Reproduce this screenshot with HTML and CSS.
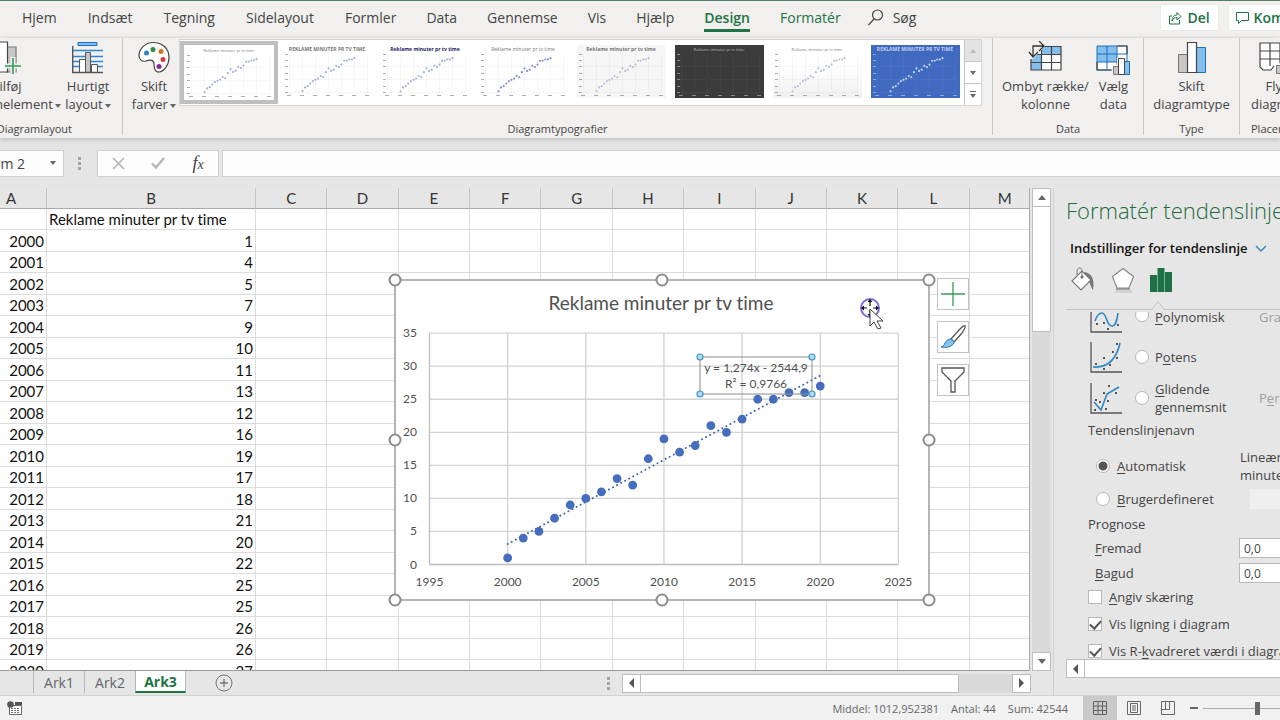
FILE: index.html
```
<!DOCTYPE html>
<html lang="da">
<head>
    <meta charset="UTF-8">
    <meta name="viewport" content="width=device-width, initial-scale=1.0">
    <title>Excel - Ark3</title>
    <link rel="stylesheet" href="styles.css">
</head>
<body>
    <!-- Shared thumbnail drawing for the chart styles -->
    <svg class="defs" width="0" height="0" aria-hidden="true">
        <symbol id="thumb-dots" viewBox="0 0 89 53">
            <g id="thumbPoints" fill="currentColor"></g>
        </symbol>
        <symbol id="thumb-axis" viewBox="0 0 89 53">
            <path d="M2 9.500h3M2 15.500h3M2 21.500h3M2 28.500h3M2 34.500h3M2 41.500h3M2 47.500h3M4 50.500h4M17 50.500h4M30 50.500h4M43 50.500h4M56 50.500h4M69 50.500h4M82 50.500h4" stroke="currentColor" stroke-width="1.200" opacity=".6"/>
            <path d="M6.500 9v38.500M19.500 9v38.500M32.500 9v38.500M45.500 9v38.500M58.500 9v38.500M71.500 9v38.500M84.500 9v38.500M6 47.500h79M6 34.500h79M6 21.500h79" stroke="currentColor" stroke-width=".5" opacity=".12"/>
        </symbol>
    </svg>

    <nav class="menu">
        <button class="tab">Hjem</button>
        <button class="tab">Indsæt</button>
        <button class="tab">Tegning</button>
        <button class="tab">Sidelayout</button>
        <button class="tab">Formler</button>
        <button class="tab">Data</button>
        <button class="tab">Gennemse</button>
        <button class="tab">Vis</button>
        <button class="tab">Hjælp</button>
        <button class="tab active">Design</button>
        <button class="tab context">Formatér</button>
        <button class="tab search">
            <svg width="16" height="17" viewBox="0 0 16 17" fill="none" stroke="#444" stroke-width="1.200"><circle cx="9.500" cy="6" r="5"/><path d="M6 10L.5 16"/></svg>
            Søg
        </button>
        <div class="menu-actions">
            <button class="action">
                <svg width="14" height="14" viewBox="0 0 14 14" fill="none" stroke="#217346"><path d="M4 5H1.500v8h10V9"/><path d="M4 10c0-4 2-6 5-6V1.500L13 5.500 9 9V6.500C7 6.500 5 7 4 10z"/></svg>
                Del
            </button>
            <button class="action">
                <svg width="13" height="13" viewBox="0 0 13 13" fill="none" stroke="#217346"><path d="M.5 1.500h12v8h-7l-3 3v-3h-2z"/></svg>
                Kommentarer
            </button>
        </div>
    </nav>

    <header class="ribbon">
        <section class="group group-layout">
            <div class="group-body">
                <button class="tool">
                    <svg width="36" height="34" viewBox="0 0 36 34" fill="#fff" stroke="#444" stroke-width="1.200"><path d="M1 13h9v18H1z" fill="#83beec" stroke="#1e6fb8"/><path d="M18 6h9v25h-9z" fill="#c8c6c4" stroke="#777"/><path d="M9.500 1h9v30h-9z"/><path d="M24 16v18M15 25h17" stroke="#f1f0ef" stroke-width="5"/><path d="M24 17v16M16 25h16" stroke="#2e9e52" stroke-width="1.600"/></svg>
                    <span>Tilføj<br>diagramelement <i class="caret"></i></span>
                </button>
                <button class="tool">
                    <svg width="32" height="34" viewBox="0 0 32 34"><path d="M1 9.500h30M1 15.500h30M1 20.500h30M1 25.500h30" stroke="#2d87d0" stroke-width="1.500"/><path d="M6 1.500h19v3H6z" fill="#83beec" stroke="#1e6fb8"/><g stroke="#555"><path d="M7.500 18.500h6v13h-6zM19.500 23.500h6v8h-6z" fill="#fff"/><path d="M13.500 11.500h5v20h-5z" fill="#c8c6c4"/><path d="M.7 5v26.500H31" fill="none" stroke-width="1.400"/></g></svg>
                    <span>Hurtigt<br>layout <i class="caret"></i></span>
                </button>
            </div>
            <h2>Diagramlayout</h2>
        </section>

        <section class="group group-styles">
            <div class="group-body">
                <button class="tool tool-colors">
                    <svg width="32" height="34" viewBox="0 0 32 34"><path d="M15 1.500C7 1.500 1 8 1 14.500c0 4 3 6.500 7 5.500 4-1.500 8-1 8 3 0 4 1 8.500 5 8 5-.6 10-7 10-14.500C31 7 24 1.500 15 1.500z" fill="#fff" stroke="#444" stroke-width="1.200"/><circle cx="8.500" cy="12" r="2.500" fill="#2b7fc3"/><circle cx="15" cy="8.500" r="2.500" fill="#2e8b4a"/><circle cx="23" cy="10.500" r="2.500" fill="#d8701c"/><circle cx="25" cy="18.500" r="2.500" fill="#d8383e"/><circle cx="21" cy="25.500" r="2.500" fill="#86259b"/></svg>
                    <span>Skift<br>farver <i class="caret"></i></span>
                </button>
                <div class="gallery">
                    <div class="thumbs" id="thumbs"></div>
                    <div class="gallery-nav">
                        <button aria-label="Op" disabled><i class="arrow up"></i></button>
                        <button aria-label="Ned"><i class="arrow down"></i></button>
                        <button class="more" aria-label="Mere"><i class="arrow down"></i></button>
                    </div>
                </div>
            </div>
            <h2>Diagramtypografier</h2>
        </section>

        <section class="group group-data">
            <div class="group-body">
                <button class="tool">
                    <svg width="34" height="34" viewBox="0 0 34 34"><path d="M3 6h30v23H3z" fill="#fff"/><path d="M14 6h19v8H14zM3 14h10v15H3z" fill="#83beec"/><path d="M3 6v23h30V5.500H3M3 13.500h30M3 21.500h30M13.500 6v23M23.500 6v23" fill="none" stroke="#444" stroke-width="1.200"/><path d="M0 0h17v5L5 18H0z" fill="#f1f0ef"/><path d="M5 15V5h10M1 11l4 5 5-5M11 0l5 5-5 5" fill="none" stroke="#333" stroke-width="1.300"/></svg>
                    <span>Ombyt række/<br>kolonne</span>
                </button>
                <button class="tool">
                    <svg width="35" height="34" viewBox="0 0 35 34"><path d="M1 5h30v24H1z" fill="#fff"/><path d="M1 5h20v16H1z" fill="#83beec"/><path d="M1 5h30v24H1zM1 13h30M1 21h30M11 5v24M21 5v24" fill="none" stroke="#1e6fb8"/><path d="M21 5h10v8M1 21v8h14" fill="none" stroke="#444" stroke-width="1.200"/><path d="M16 24h5v-7h9v3h5v14H16z" fill="#f1f0ef"/><path d="M17.500 25.500h5v8h-5z" fill="#c8c6c4" stroke="#777"/><path d="M28.500 20.500h5v13h-5z" fill="#83beec" stroke="#1e6fb8"/><path d="M22.500 17.500h6v16h-6z" fill="#fff" stroke="#444"/></svg>
                    <span>Vælg<br>data</span>
                </button>
            </div>
            <h2>Data</h2>
        </section>

        <section class="group group-type">
            <div class="group-body">
                <button class="tool">
                    <svg width="28" height="34" viewBox="0 0 28 34"><path d="M.5 13.500h9v18h-9z" fill="#c8c6c4" stroke="#777"/><path d="M18.500 6.500h9v25h-9z" fill="#83beec" stroke="#1e6fb8"/><path d="M9.500 1.500h9v30h-9z" fill="#fff" stroke="#444" stroke-width="1.200"/></svg>
                    <span>Skift<br>diagramtype</span>
                </button>
            </div>
            <h2>Type</h2>
        </section>

        <section class="group group-place">
            <div class="group-body">
                <button class="tool">
                    <svg width="34" height="34" viewBox="0 0 34 34"><path d="M1 2h32v20l-18 7H1z" fill="#fff"/><path d="M33 2H1v24l3 3h8l3-4M1 10h32M1 18h32M11 2v23M21 2v20" fill="none" stroke="#444" stroke-width="1.200"/><path d="M17.500 24.500h6v8h-6z" fill="#c8c6c4" stroke="#777"/><path d="M23.500 18.500h6v14h-6z" fill="#fff" stroke="#444"/></svg>
                    <span>Flyt<br>diagram</span>
                </button>
            </div>
            <h2>Placering</h2>
        </section>
    </header>

    <div class="formula-bar">
        <div class="name-box">
            <input type="text" value="Diagram 2" aria-label="Navneboks">
            <button aria-label="Vis navne"><i class="caret"></i></button>
        </div>
        <i class="grip"></i>
        <div class="formula-tools">
            <button aria-label="Annuller"><svg width="13" height="13" viewBox="0 0 13 13" stroke="#b5b5b5" stroke-width="1.700"><path d="M1 1l11 11M12 1L1 12"/></svg></button>
            <button aria-label="Enter"><svg width="14" height="12" viewBox="0 0 14 12" fill="none" stroke="#b5b5b5" stroke-width="2.400"><path d="M1 6.500l4 4L13 1"/></svg></button>
            <button class="fx" aria-label="Indsæt funktion">f<small>x</small></button>
        </div>
        <input class="formula" type="text" aria-label="Formel">
    </div>

    <main class="workspace">
        <div class="book">
            <div class="sheet-area">
                <div class="sheet">
                    <table>
                        <colgroup><col class="col-a"><col class="col-b"></colgroup>
                        <thead><tr id="columns"></tr></thead>
                        <tbody id="rows"></tbody>
                    </table>

                    <svg class="chart" width="536" height="322" viewBox="0 0 536 322">
                        <rect x="1" y="1" width="534" height="320" fill="#fff" stroke="#a3a3a3" stroke-width="1.600"/>
                        <text class="chart-title" x="267" y="31">Reklame minuter pr tv time</text>
                        <g id="gridlines"></g>
                        <g id="axisLabels" class="axis"></g>
                        <line id="trend" stroke="#3f63b5" stroke-width="1.900" stroke-dasharray="0.100 4.500" stroke-linecap="round"/>
                        <g id="points" fill="#456dbd"></g>
                        <g class="equation">
                            <rect x="306" y="78" width="112" height="37" fill="none" stroke="#8b8b8b"/>
                            <text x="362" y="93">y = 1,274x - 2544,9</text>
                            <text x="362" y="109">R² = 0,9766</text>
                            <g fill="#a9dcf5" stroke="#4a90c0" stroke-width="1.200">
                                <circle cx="306" cy="78" r="3"/><circle cx="418" cy="78" r="3"/><circle cx="306" cy="115" r="3"/><circle cx="418" cy="115" r="3"/>
                            </g>
                        </g>
                        <g fill="#fff" stroke="#8c8c8c" stroke-width="2">
                            <circle cx="1" cy="1" r="5.500"/><circle cx="268" cy="1" r="5.500"/><circle cx="535" cy="1" r="5.500"/>
                            <circle cx="1" cy="161" r="5.500"/><circle cx="535" cy="161" r="5.500"/>
                            <circle cx="1" cy="321" r="5.500"/><circle cx="268" cy="321" r="5.500"/><circle cx="535" cy="321" r="5.500"/>
                        </g>
                    </svg>

                    <div class="chart-buttons">
                        <button aria-label="Diagramelementer"><svg width="24" height="24" viewBox="0 0 24 24" stroke="#3a9a5b" stroke-width="1.300"><path d="M12 0v24M0 12h24"/></svg></button>
                        <button aria-label="Diagramtypografier"><svg width="26" height="24" viewBox="0 0 26 24"><path d="M25 1c1 1-1 4-3 7l-8 9-3-3 8-9c3-3 5-5 6-4z" fill="#fff" stroke="#555" stroke-width="1.300"/><path d="M11 14c2 1 3 2 3 4-2 4-8 5-13 4 3-1 3-2 4-4s3-4 6-4z" fill="#83c3f1" stroke="#2b76b3"/></svg></button>
                        <button aria-label="Diagramfiltre"><svg width="24" height="26" viewBox="0 0 24 26" fill="#fff" stroke="#555" stroke-width="1.300"><path d="M1 1h22v4l-9 9v11h-4V14L1 5z"/></svg></button>
                    </div>

                    <svg class="pointer" width="26" height="34" viewBox="0 0 26 34">
                        <circle cx="10" cy="11" r="9" fill="#fff" stroke="#7a6fd6" stroke-width="2"/>
                        <path d="M10 4v5M10 13v5M2 11h5M13 11h5" stroke="#111" stroke-width="1.200"/>
                        <path d="M10 2L7.500 5h5zM10 20l-2.500-3h5zM1 11l3-2.500v5zM19 11l-3-2.500v5z" fill="#111"/>
                        <path d="M10 12v17l4-4 4 7 3-1-4-7h6z" fill="#fff" stroke="#444"/>
                    </svg>
                </div>

                <div class="scroll-y">
                    <button aria-label="Rul op"><i class="arrow up"></i></button>
                    <div class="thumb-y"></div>
                    <button aria-label="Rul ned"><i class="arrow down"></i></button>
                </div>
            </div>

            <div class="sheet-bar">
                <div class="sheet-tabs">
                    <button>Ark1</button>
                    <button>Ark2</button>
                    <button class="current">Ark3</button>
                </div>
                <button class="add-sheet" aria-label="Nyt ark"><svg width="18" height="18" viewBox="0 0 18 18" fill="none" stroke="#777"><circle cx="9" cy="9" r="8"/><path d="M9 5v8M5 9h8" stroke-width="1.400"/></svg></button>
                <i class="grip"></i>
                <div class="scroll-x">
                    <button aria-label="Rul til venstre"><i class="arrow left"></i></button>
                    <div class="thumb-x"></div>
                    <button aria-label="Rul til højre"><i class="arrow right"></i></button>
                </div>
            </div>
        </div>

        <aside class="pane">
            <h1>Formatér tendenslinje</h1>
            <button class="pane-menu">Indstillinger for tendenslinje
                <svg width="12" height="7" viewBox="0 0 12 7" fill="none" stroke="#2d87c8" stroke-width="1.400"><path d="M1 1l5 5 5-5"/></svg>
            </button>
            <div class="pane-icons">
                <button aria-label="Fyld og streg"><svg width="26" height="26" viewBox="0 0 26 26"><path d="M14 5c7 1 11 6 9 18-2-2-3-8-5-11z" fill="#777"/><path d="M2 14L12 4l9 9-10 10z" fill="#fff" stroke="#777" stroke-width="1.200"/><path d="M7 8V4c0-4 5-4 5 0v6" fill="none" stroke="#777"/><circle cx="12" cy="10" r="1.500" fill="#666"/></svg></button>
                <button aria-label="Effekter"><svg width="24" height="26" viewBox="0 0 24 26"><path d="M5 23h15l2 3H3z" fill="#d2d2d2"/><path d="M12 1.500l10.500 8L18 21H6L1.500 9.500z" fill="#fff" stroke="#888" stroke-width="1.200"/><path d="M5 22h14" stroke="#666"/></svg></button>
                <button aria-label="Indstillinger for tendenslinje"><svg width="22" height="24" viewBox="0 0 22 24" fill="#1e7145"><path d="M0 7h7v17H0zM7.500 0h7v24h-7zM15 4h7v20h-7z"/></svg></button>
            </div>
            <svg class="pane-rule" width="226" height="10" viewBox="0 0 226 10" fill="none" stroke="#c3c3c3"><path d="M0 9.500h86l6-8 6 8h130"/></svg>

            <form class="options">
                <div class="type type-cut">
                    <svg width="32" height="31" viewBox="0 0 32 31"><path d="M5 19c2-6 4-8 7-8 5 0 4 13 10 13 4 0 5-6 6-13" fill="none" stroke="#2d87c8" stroke-width="1.600"/><path d="M1 1v29h31" fill="none" stroke="#555" stroke-width="1.300"/><path d="M6 21h2v2H6zM13 20h2v2h-2zM17 26h2v2h-2zM27 22h2v2h-2z" fill="#555"/></svg>
                    <input type="radio" name="type" id="poly">
                    <label for="poly"><u>P</u>olynomisk</label>
                    <span class="muted">Grad</span>
                </div>
                <div class="type">
                    <svg width="32" height="32" viewBox="0 0 32 32"><path d="M3 26c14 1 23-6 27-24" fill="none" stroke="#2d87c8" stroke-width="1.600"/><path d="M1 1v30h31" fill="none" stroke="#555" stroke-width="1.300"/><path d="M5 22h2v2H5zM13 16h2v2h-2zM13 27h2v2h-2zM19 23h2v2h-2zM22 10h2v2h-2zM26 16h2v2h-2zM26 2h2v2h-2z" fill="#555"/></svg>
                    <input type="radio" name="type" id="power">
                    <label for="power">P<u>o</u>tens</label>
                </div>
                <div class="type">
                    <svg width="32" height="32" viewBox="0 0 32 32"><path d="M4 20l7 8 6-16 12-7" fill="none" stroke="#2d87c8" stroke-width="1.600"/><path d="M1 1v30h31" fill="none" stroke="#555" stroke-width="1.300"/><path d="M5 17h2v2H5zM4 27h2v2H4zM9 19h2v2H9zM13 10h2v2h-2zM15 26h2v2h-2zM17 18h2v2h-2zM18 3h2v2h-2zM25 10h2v2h-2z" fill="#555"/></svg>
                    <input type="radio" name="type" id="moving">
                    <label for="moving"><u>G</u>lidende<br>gennemsnit</label>
                    <span class="muted">P<u>e</u>riode</span>
                </div>

                <h3>Tendenslinjenavn</h3>
                <div class="name-row">
                    <input type="radio" name="name" id="auto" checked>
                    <label for="auto"><u>A</u>utomatisk</label>
                    <span>Lineær<br>minuter</span>
                </div>
                <div class="name-row custom">
                    <input type="radio" name="name" id="custom">
                    <label for="custom"><u>B</u>rugerdefineret</label>
                    <input class="field" type="text" aria-label="Navn" disabled>
                </div>

                <h3>Prognose</h3>
                <div class="forecast">
                    <label for="forward"><u>F</u>remad</label>
                    <input class="field" type="text" id="forward" value="0,0">
                </div>
                <div class="forecast">
                    <label for="backward"><u>B</u>agud</label>
                    <input class="field" type="text" id="backward" value="0,0">
                </div>
                <div class="check first">
                    <input type="checkbox" id="intercept">
                    <label for="intercept"><u>A</u>ngiv skæring</label>
                </div>
                <div class="check">
                    <input type="checkbox" id="showEq" checked>
                    <label for="showEq">Vis ligning i <u>d</u>iagram</label>
                </div>
                <div class="check">
                    <input type="checkbox" id="showR" checked>
                    <label for="showR">Vis R-<u>k</u>vadreret værdi i diagram</label>
                </div>
            </form>
            <div class="pane-scroll">
                <button aria-label="Rul til venstre"><i class="arrow left"></i></button>
                <div class="thumb-x"></div>
            </div>
        </aside>
    </main>

    <footer class="status">
        <button class="macro" aria-label="Optag makro"><svg width="16" height="15" viewBox="0 0 16 15"><path d="M2.500 4.500h12v9h-12z" fill="#fff" stroke="#666"/><path d="M8 1h7v3H8z" fill="#555"/><path d="M4 7.500h9M4 9.500h9M4 11.500h9" stroke="#777" stroke-dasharray="2 1"/><circle cx="3.500" cy="3.500" r="3.300" fill="#555"/></svg></button>
        <span>Middel: 1012,952381</span>
        <span>Antal: 44</span>
        <span>Sum: 42544</span>
        <div class="views">
            <button class="on" aria-label="Normal"><svg width="14" height="14" viewBox="0 0 14 14" fill="none" stroke="#666"><path d="M.5.5h13v13H.5zM.5 5h13M.5 9.500h13M5 .5v13M9.500.5v13"/></svg></button>
            <button aria-label="Sidelayout"><svg width="14" height="14" viewBox="0 0 14 14" fill="none" stroke="#666"><path d="M.5.5h13v13H.5zM3.500 2.500h7v9h-7zM5 5h4M5 7h4M5 9h4"/></svg></button>
            <button aria-label="Vis sideskift"><svg width="14" height="14" viewBox="0 0 14 14" fill="none" stroke="#666"><path d="M.5.5h13v13H.5zM.5 8.500h8v-8M4.500.5v8"/></svg></button>
        </div>
        <button class="zoom-out" aria-label="Zoom ud"></button>
        <input class="zoom" type="range" min="10" max="190" value="100" aria-label="Zoom">
    </footer>

    <script>
        const minutes = [1, 4, 5, 7, 9, 10, 11, 13, 12, 16, 19, 17, 18, 21, 20, 22, 25, 25, 26, 26, 27];
        const letters = 'ABCDEFGHIJKLM'.split('');

        // Worksheet
        document.getElementById('columns').innerHTML = letters.map(l => `<th scope="col">${l}</th>`).join('');
        const empty = '<td></td>'.repeat(letters.length - 2);
        let rows = `<tr><td></td><td class="text">Reklame minuter pr tv time</td>${empty}</tr>`;
        minutes.forEach((m, i) => {
            rows += `<tr><td>${2000 + i}</td><td>${m}</td>${empty}</tr>`;
        });
        document.getElementById('rows').innerHTML = rows;

        // Chart
        const px = year => 35.5 + (year - 1995) * 15.63;
        const py = value => 285.5 - value * 6.61;
        let lines = '';
        let labels = '';
        for (let v = 0; v <= 35; v += 5) {
            lines += `<path d="M35.5 ${py(v)}H504.5" stroke="${v ? '#d4d4d4' : '#bcbcbc'}" stroke-width="1.3"/>`;
            labels += `<text class="value" x="23" y="${py(v) + 4}">${v}</text>`;
        }
        for (let y = 1995; y <= 2025; y += 5) {
            lines += `<path d="M${px(y)} 54V285.5" stroke="${y > 1995 ? '#d0d0d0' : '#bcbcbc'}" stroke-width="1.3"/>`;
            labels += `<text x="${px(y)}" y="307">${y}</text>`;
        }
        document.getElementById('gridlines').innerHTML = lines;
        document.getElementById('axisLabels').innerHTML = labels;
        document.getElementById('points').innerHTML =
            minutes.map((m, i) => `<circle cx="${px(2000 + i)}" cy="${py(m)}" r="4.4"/>`).join('');

        const trend = document.getElementById('trend');
        trend.setAttribute('x1', px(2000));
        trend.setAttribute('y1', py(3.1));
        trend.setAttribute('x2', px(2020));
        trend.setAttribute('y2', py(28.58));

        // Chart style gallery
        document.getElementById('thumbPoints').innerHTML =
            minutes.map((m, i) => `<circle cx="${19.5 + i * 2.6}" cy="${47.5 - m * 1.27}" r="1.1"/>`).join('');
        const styles = ['plain small', 'caps bold', 'navy bold', 'violet', 'grey bold', 'dark small', 'fade small', 'blue caps bold'];
        document.getElementById('thumbs').innerHTML = styles.map((s, i) => `
            <button class="style ${s}${i === 0 ? ' selected' : ''}" aria-label="Typografi ${i + 1}">
                <svg width="89" height="53" viewBox="0 0 89 53">
                    <text x="44" y="6">${s.includes('caps') ? 'REKLAME MINUTER PR TV TIME' : 'Reklame minuter pr tv time'}</text>
                    <use href="#thumb-axis" class="marks"/>
                    <use href="#thumb-dots" class="dots"/>
                </svg>
            </button>`).join('');
    </script>
</body>
</html>
```
FILE: styles.css
```
* {
    margin: 0;
    padding: 0;
    box-sizing: border-box;
}

body {
    height: 100vh;
    display: flex;
    flex-direction: column;
    overflow: hidden;
    background: #e6e6e6;
    color: #444;
    font-family: 'Open Sans', 'Noto Sans', sans-serif;
    font-size: 13px;
    white-space: nowrap;
}

button,
input {
    font: inherit;
    color: inherit;
    background: none;
    border: none;
    border-radius: 0;
    outline: none;
}

button {
    display: flex;
    align-items: center;
    justify-content: center;
    flex: none;
    white-space: nowrap;
}

svg {
    flex: none;
    display: block;
}

.defs {
    position: absolute;
}

/* Small glyphs */
.caret,
.arrow {
    display: inline-block;
    border: 3px solid transparent;
    border-top: 4px solid #666;
    border-bottom: none;
    vertical-align: middle;
}

.arrow {
    border-width: 5px 4px 0;
}

.arrow.up {
    border-top: none;
    border-bottom: 5px solid #666;
}

.arrow.left {
    border: 5px solid transparent;
    border-left: none;
    border-right-color: #555;
}

.arrow.right {
    border: 5px solid transparent;
    border-right: none;
    border-left-color: #555;
}

.grip {
    width: 3px;
    height: 13px;
    background: repeating-linear-gradient(#a5a5a5 0 3px, transparent 3px 5px);
}

/* Menu */
.menu {
    flex: none;
    display: flex;
    height: 38px;
    padding-left: 22px;
    gap: 31px;
    border-top: 1px solid #557f6b;
    background: #f1f0ee;
    font-size: 14px;
    overflow: hidden;
}

.tab {
    height: 33px;
}

.tab:nth-child(n + 6) {
    margin-left: -1px;
}

.tab.active {
    height: 31px;
    border-bottom: 3px solid #217346;
    padding-top: 5px;
    color: #217346;
    font-weight: 600;
}

.tab.context {
    color: #217346;
}

.tab.search {
    gap: 9px;
    margin-left: -4px;
}

.menu-actions {
    display: flex;
    flex: 1;
    gap: 11px;
    margin-left: 214px;
    padding-top: 4px;
}

.action {
    height: 25px;
    padding: 0 8px 0 7px;
    gap: 5px;
    background: #fff;
    box-shadow: 0 0 1px #ccc;
    color: #217346;
    font-weight: 600;
}

/* Ribbon */
.ribbon {
    flex: none;
    display: flex;
    height: 100px;
    background: #f1f0ef;
    box-shadow: 0 1px 5px #b5b5b5;
    z-index: 1;
}

.group {
    display: flex;
    flex-direction: column;
    flex: none;
    height: 100%;
}

.group + .group {
    border-left: 1px solid #c8c8c8;
    height: 97px;
}

.group-body {
    flex: none;
    display: flex;
    height: 82px;
}

.group h2 {
    font-size: 11px;
    font-weight: 400;
    line-height: 18px;
    text-align: center;
}

.tool {
    flex-direction: column;
    justify-content: flex-start;
    padding-top: 3px;
    gap: 2px;
    line-height: 18px;
}

.tool .caret {
    margin-left: -1px;
}

.group-layout {
    width: 122px;
    overflow: hidden;
}

.group-layout .group-body {
    justify-content: flex-end;
    padding-right: 11px;
    gap: 4px;
}

.group-layout h2 {
    align-self: flex-start;
    width: 72px;
    display: flex;
    justify-content: flex-end;
}

.group-styles {
    flex: 1;
    min-width: 0;
}

.tool-colors {
    width: 56px;
    padding-left: 6px;
}

.gallery {
    display: flex;
    height: 67px;
    margin-top: 1px;
    border: 1px solid #d5d5d5;
    background: #fff;
    overflow: hidden;
}

.thumbs {
    display: flex;
    flex: 1;
    min-width: 0;
    overflow: hidden;
}

.style {
    width: 98px;
    height: 63px;
    color: #777;
}

.style.selected {
    border: 4px solid #bfbfbf;
    margin-top: 1px;
}

.style text {
    font-size: 5px;
    text-anchor: middle;
    fill: currentColor;
}

.style.small text {
    font-size: 4px;
}

.style.bold text {
    font-weight: 700;
}

.style .dots {
    color: #a3b1d6;
}

.style.navy text {
    fill: #20205f;
}

.style.violet .dots {
    color: #858fce;
}

.style.grey svg {
    background: #f6f6f6;
}

.style.grey .dots,
.style.fade .dots {
    color: #bcc0d8;
}

.style.dark svg {
    background: #3b3b3b;
}

.style.dark {
    color: #bbb;
}

.style.dark .dots {
    color: #3b3b3b;
}

.style.fade svg {
    background: linear-gradient(#fff 40%, #f0f0f0);
}

.style.blue svg {
    background: #4069c0;
}

.style.blue,
.style.blue .dots {
    color: #c3d1f0;
}

.gallery-nav {
    width: 17px;
    border-left: 1px solid #c8c8c8;
}

.gallery-nav button {
    width: 100%;
    height: 22px;
    border-bottom: 1px solid #c8c8c8;
}

.gallery-nav button:disabled {
    background: #e3e3e3;
}

.gallery-nav .arrow {
    border-left-width: 3px;
    border-right-width: 3px;
}

.gallery-nav .arrow.down {
    border-top-width: 4px;
}

.gallery-nav .arrow.up {
    border-bottom: 4px solid #bbb;
}

.gallery-nav .more {
    flex-direction: column;
    gap: 2px;
}

.gallery-nav .more::before {
    content: '';
    width: 6px;
    height: 1px;
    background: #666;
}

.group-data {
    width: 151px;
}

.group-data .group-body {
    padding-left: 9px;
    gap: 7px;
}

.group-type {
    width: 96px;
}

.group-type .group-body {
    justify-content: center;
}

.group-place {
    width: 41px;
    overflow: hidden;
}

.group-place .group-body {
    padding-left: 11px;
}

.group-place h2 {
    padding-left: 11px;
    text-align: left;
}

/* Formula bar */
.formula-bar {
    flex: none;
    display: flex;
    align-items: center;
    height: 50px;
    background: #e5e5e5;
}

.name-box,
.formula-tools,
.formula {
    height: 27px;
    background: #fdfdfd;
    border: 1px solid #cfcfcf;
}

.name-box {
    display: flex;
    justify-content: flex-end;
    width: 64px;
    margin-right: 14px;
    border-left: none;
    overflow: hidden;
}

.name-box input {
    flex: none;
    width: 80px;
    font-size: 14px;
    text-align: right;
}

.name-box button {
    width: 38px;
    padding-left: 18px;
}

.formula-tools {
    display: flex;
    width: 122px;
    margin: 0 3px 0 16px;
}

.formula-tools button {
    flex: 1;
}

.fx {
    font-family: 'Liberation Serif', serif;
    font-size: 18px;
    font-style: italic;
}

.fx small {
    font-size: 14px;
    padding-top: 3px;
}

.formula {
    flex: 1;
    min-width: 0;
    border-right: none;
}

/* Workspace */
.workspace {
    flex: 1;
    min-height: 0;
    display: flex;
}

.book {
    flex: 1;
    min-width: 0;
    display: flex;
    flex-direction: column;
}

.sheet-area {
    flex: 1;
    min-height: 0;
    display: flex;
}

.sheet {
    position: relative;
    flex: 1;
    min-width: 0;
    overflow: hidden;
    background: #fff;
    border-right: 1px solid #aaa;
    border-bottom: 1px solid #999;
}

table {
    width: calc(100% + 12px);
    table-layout: fixed;
    border-collapse: separate;
    border-spacing: 0;
    font-family: Lato, sans-serif;
    font-size: 15px;
    font-variant-ligatures: none;
    color: #111;
}

.col-a {
    width: 47px;
}

.col-b {
    width: 209px;
}

th {
    height: 21px;
    background: #e6e6e6;
    border-right: 1px solid #c6c6c6;
    border-bottom: 1px solid #aaa;
    font-weight: 400;
    line-height: 20px;
    color: #333;
}

th:first-child {
    padding-right: 24px;
}

td {
    height: 22px;
    border-right: 1px solid #dcdcdc;
    border-bottom: 1px solid #dcdcdc;
    padding-right: 2px;
    line-height: 20px;
    text-align: right;
}

tr:nth-child(odd) td {
    height: 21px;
}

td.text {
    padding-left: 2px;
    text-align: left;
}

.chart {
    position: absolute;
    left: 394px;
    top: 91px;
    overflow: visible;
    font-family: Lato, sans-serif;
    font-variant-ligatures: none;
}

.chart text {
    fill: #505050;
    text-anchor: middle;
    font-size: 12px;
}

.chart text.value {
    text-anchor: end;
}

.chart text.chart-title {
    font-size: 19px;
}

.chart-buttons {
    position: absolute;
    left: 937px;
    top: 90px;
    display: flex;
    flex-direction: column;
    gap: 11px;
}

.chart-buttons button {
    width: 32px;
    height: 32px;
    background: #fff;
    border: 1px solid #c4c4c4;
}

.pointer {
    position: absolute;
    left: 860px;
    top: 109px;
}

/* Scroll bars */
.scroll-y {
    display: flex;
    flex-direction: column;
    justify-content: space-between;
    width: 19px;
    margin: 0 2px;
    background: #dadada;
}

.scroll-y button,
.scroll-x button,
.pane-scroll button {
    width: 19px;
    height: 19px;
    background: #fff;
    border: 1px solid #bdbdbd;
}

.thumb-y {
    height: 125px;
    margin-bottom: auto;
    background: #fff;
    border: 1px solid #bdbdbd;
    border-top: none;
}

.sheet-bar {
    flex: none;
    display: flex;
    align-items: center;
    height: 24px;
}

.sheet-tabs {
    display: flex;
    align-self: flex-start;
    padding-left: 33px;
    font-size: 14px;
}

.sheet-tabs button {
    width: 51px;
    height: 22px;
    border-left: 1px solid #b5b5b5;
    color: #666;
}

.sheet-tabs .current {
    background: #fff;
    border-bottom: 2px solid #217346;
    border-right: 1px solid #b5b5b5;
    color: #217346;
    font-weight: 700;
}

.add-sheet {
    margin-left: 29px;
    margin-right: auto;
}

.scroll-x {
    display: flex;
    width: 409px;
    margin: 0 22px 0 12px;
    background: #dadada;
}

.thumb-x {
    width: 318px;
    margin-right: auto;
    background: #fff;
    border: 1px solid #bdbdbd;
    border-left: none;
}

/* Format pane */
.pane {
    display: flex;
    flex-direction: column;
    align-items: flex-start;
    width: 227px;
    padding-left: 12px;
    border-left: 1px solid #cfcfcf;
    overflow: hidden;
}

.pane h1 {
    margin-top: 6px;
    color: #1e6b41;
    font-size: 22px;
    font-weight: 300;
    line-height: 32px;
}

.pane-menu {
    margin: 12px 0 0 4px;
    gap: 7px;
    height: 20px;
    color: #111;
    font-weight: 600;
}

.pane-icons {
    display: flex;
    align-items: center;
    height: 44px;
    margin-left: 4px;
    gap: 15px;
}

.pane-rule {
    margin-top: -2px;
}

.options {
    flex: 1;
    min-height: 0;
    width: 260px;
    padding: 2px 0 0 22px;
    overflow: hidden;
    line-height: 18px;
}

.options h3 {
    margin-top: 11px;
    font-size: 13px;
    font-weight: 400;
}

.options u {
    text-underline-offset: 2px;
}

.type {
    display: grid;
    grid-template-columns: 39px 14px 98px 1fr;
    column-gap: 6px;
    align-items: center;
    height: 32px;
    margin: 0 0 7px 2px;
}

.type-cut {
    grid-template-rows: 100%;
    height: 21px;
    align-items: end;
    margin-bottom: 8px;
    overflow: hidden;
}

.type-cut label,
.type-cut input,
.type-cut .muted {
    align-self: start;
    margin-top: -4px;
}

.type + h3 {
    margin-top: 9px;
}

.muted {
    color: #a0a0a0;
}

input[type="radio"],
input[type="checkbox"] {
    appearance: none;
    flex: none;
    width: 14px;
    height: 14px;
    background: #fff;
    border: 1px solid #b8b8b8;
}

input[type="radio"] {
    border-radius: 50%;
}

input[type="radio"]:checked {
    background: radial-gradient(#555 0 4px, #fff 5px);
}

input[type="checkbox"]:checked::after {
    content: '';
    display: block;
    width: 9px;
    height: 5px;
    margin: 2px 0 0 1px;
    border: solid #555;
    border-width: 0 0 2px 2px;
    transform: rotate(-48deg);
}

.name-row {
    display: grid;
    grid-template-columns: 14px 116px 1fr;
    column-gap: 7px;
    align-items: center;
    height: 36px;
    margin: 9px 0 0 8px;
}

.name-row.custom {
    height: 20px;
    margin-top: 5px;
}

.field {
    height: 20px;
    width: 60px;
    padding-left: 4px;
    background: #fff;
    border: 1px solid #b8b8b8;
    font-size: 12px;
}

.field:disabled {
    margin-left: 10px;
    background: #efefef;
    border: none;
}

.custom + h3 {
    margin-top: 6px;
}

.forecast {
    display: grid;
    grid-template-columns: 144px 1fr;
    align-items: center;
    height: 20px;
    margin: 5px 0 0 7px;
}

.check {
    display: flex;
    align-items: center;
    gap: 7px;
    height: 18px;
    margin-top: 9px;
}

.check.first {
    margin-top: 5px;
}

.pane-scroll {
    display: flex;
    flex: none;
    width: 260px;
    margin-bottom: 17px;
    background: #fff;
}

.pane-scroll .thumb-x {
    flex: 1;
}

/* Status bar */
.status {
    flex: none;
    display: flex;
    align-items: center;
    height: 25px;
    padding-left: 7px;
    gap: 12px;
    background: #f1f1f1;
    border-top: 1px solid #d2d2d2;
    color: #666;
    font-size: 11px;
    overflow: hidden;
}

.macro {
    margin-right: auto;
}

.views {
    display: flex;
    align-self: stretch;
    margin-left: 3px;
}

.views button {
    width: 34px;
}

.views .on {
    background: #c9c9c9;
}

.zoom-out {
    width: 8px;
    height: 2px;
    margin-left: -7px;
    background: #666;
}

.zoom {
    appearance: none;
    width: 109px;
    height: 14px;
    margin: 0 -32px 0 -7px;
    background: linear-gradient(#aaa, #aaa) center / 100% 1px no-repeat;
}

.zoom::-webkit-slider-thumb {
    appearance: none;
    width: 5px;
    height: 13px;
    background: #666;
}
```
